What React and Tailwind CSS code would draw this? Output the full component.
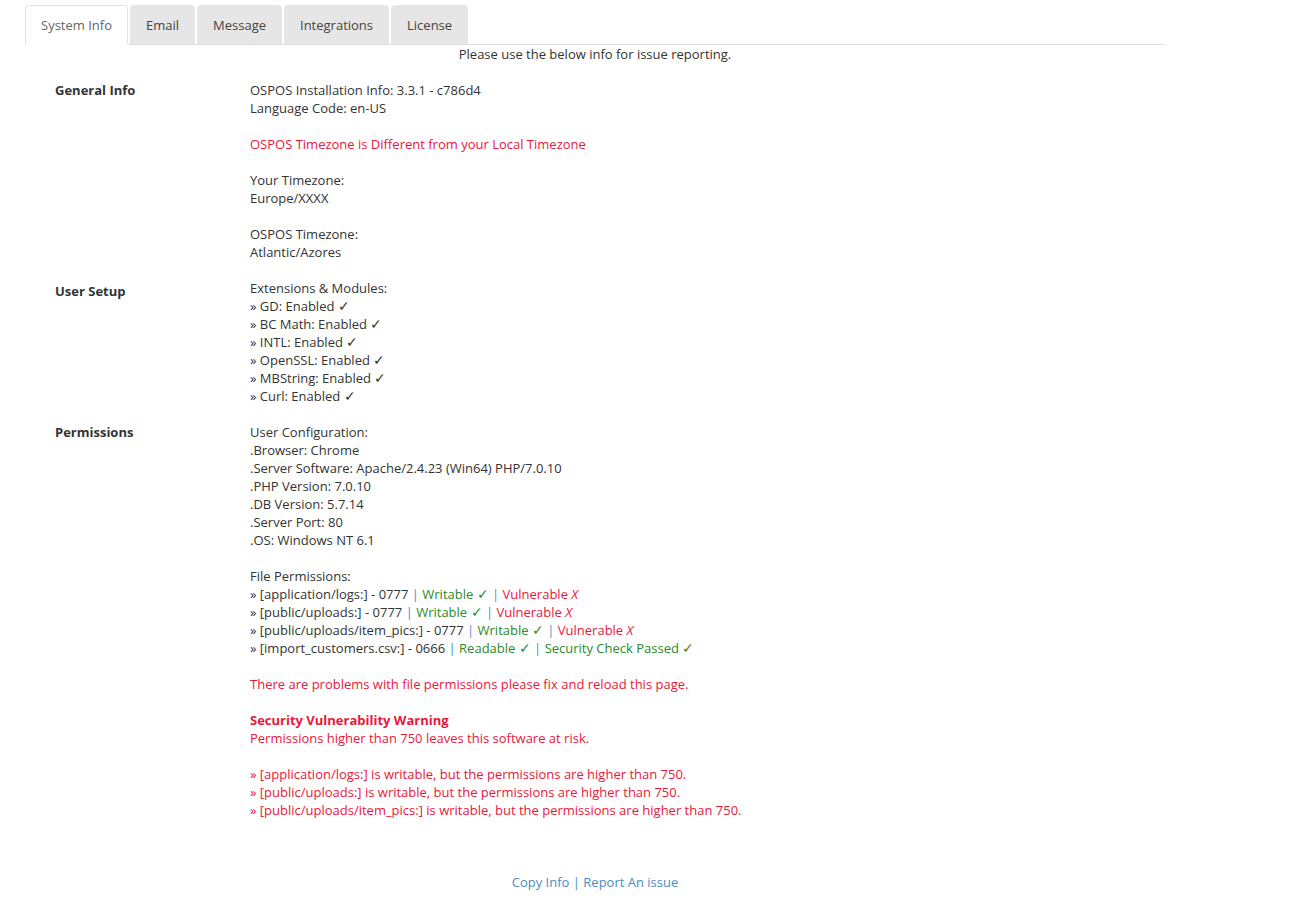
import React from 'react';

const RED = 'text-[#e8173c]';
const GREEN = 'text-[#2b8a2b]';

const Sep = () => <span className="text-[#4a90c8]"> | </span>;

const Check = () => <span className="text-[14px] leading-none">✓</span>;

const tabs = ['System Info', 'Email', 'Message', 'Integrations', 'License'];

const Tabs = () => (
  <div className="flex border-b border-[#dddddd] pt-[5px]">
    {tabs.map((t, i) =>
      i === 0 ? (
        <div
          key={t}
          className="h-[40px] px-[15px] flex items-center bg-white border border-[#e4e4e4] border-b-white -mb-px text-[#666] rounded-t-sm"
        >
          {t}
        </div>
      ) : (
        <div
          key={t}
          className="h-[39px] px-[16px] ml-[2px] flex items-center bg-[#e6e6e6] text-[#444] rounded-t-sm"
        >
          {t}
        </div>
      )
    )}
  </div>
);

const Row = ({ label, children }) => (
  <div className="flex">
    <div className="w-[195px] font-bold text-[#333]">{label}</div>
    <div className="flex-1">{children}</div>
  </div>
);

const Blank = () => <div className="h-[18px]" />;

export default function App() {
  return (
    <div
      className="min-h-screen bg-white text-[13px] leading-[18px] text-[#333]"
      style={{ fontFamily: "'Open Sans', 'Liberation Sans', sans-serif" }}
    >
      <div className="ml-[25px] w-[1140px]">
        <Tabs />
        <div className="text-center text-[#333]">Please use the below info for issue reporting.</div>
        <div className="pl-[30px] mt-[18px]">
          <Row label="General Info">
            <div>OSPOS Installation Info: 3.3.1 - c786d4</div>
            <div>Language Code: en-US</div>
            <Blank />
            <div className={RED}>OSPOS Timezone is Different from your Local Timezone</div>
            <Blank />
            <div>Your Timezone:</div>
            <div>Europe/XXXX</div>
            <Blank />
            <div>OSPOS Timezone:</div>
            <div>Atlantic/Azores</div>
            <Blank />
          </Row>
          <Row label={<div className="pt-[3px]">User Setup</div>}>
            <div>Extensions &amp; Modules:</div>
            <div>» GD: Enabled <Check /></div>
            <div>» BC Math: Enabled <Check /></div>
            <div>» INTL: Enabled <Check /></div>
            <div>» OpenSSL: Enabled <Check /></div>
            <div>» MBString: Enabled <Check /></div>
            <div>» Curl: Enabled <Check /></div>
            <Blank />
          </Row>
          <Row label="Permissions">
            <div>User Configuration:</div>
            <div>.Browser: Chrome</div>
            <div>.Server Software: Apache/2.4.23 (Win64) PHP/7.0.10</div>
            <div>.PHP Version: 7.0.10</div>
            <div>.DB Version: 5.7.14</div>
            <div>.Server Port: 80</div>
            <div>.OS: Windows NT 6.1</div>
            <Blank />
            <div>File Permissions:</div>
            <div>
              » [application/logs:] - 0777<Sep /><span className={GREEN}>Writable <Check /></span><Sep />
              <span className={RED}>Vulnerable <i>X</i></span>
            </div>
            <div>
              » [public/uploads:] - 0777<Sep /><span className={GREEN}>Writable <Check /></span><Sep />
              <span className={RED}>Vulnerable <i>X</i></span>
            </div>
            <div>
              » [public/uploads/item_pics:] - 0777<Sep /><span className={GREEN}>Writable <Check /></span><Sep />
              <span className={RED}>Vulnerable <i>X</i></span>
            </div>
            <div>
              » [import_customers.csv:] - 0666<Sep /><span className={GREEN}>Readable <Check /></span><Sep />
              <span className={GREEN}>Security Check Passed <Check /></span>
            </div>
            <Blank />
            <div className={RED}>There are problems with file permissions please fix and reload this page.</div>
            <Blank />
            <div className={`${RED} font-bold`}>Security Vulnerability Warning</div>
            <div className={RED}>Permissions higher than 750 leaves this software at risk.</div>
            <Blank />
            <div className={RED}>» [application/logs:] is writable, but the permissions are higher than 750.</div>
            <div className={RED}>» [public/uploads:] is writable, but the permissions are higher than 750.</div>
            <div className={RED}>» [public/uploads/item_pics:] is writable, but the permissions are higher than 750.</div>
          </Row>
        </div>
        <div className="text-center mt-[54px] pb-[14px]">
          <span className="text-[#4a8cc4]">Copy Info</span>
          <span className="text-[#4a8cc4]"> | </span>
          <span className="text-[#4a8cc4]">Report An issue</span>
        </div>
      </div>
    </div>
  );
}
